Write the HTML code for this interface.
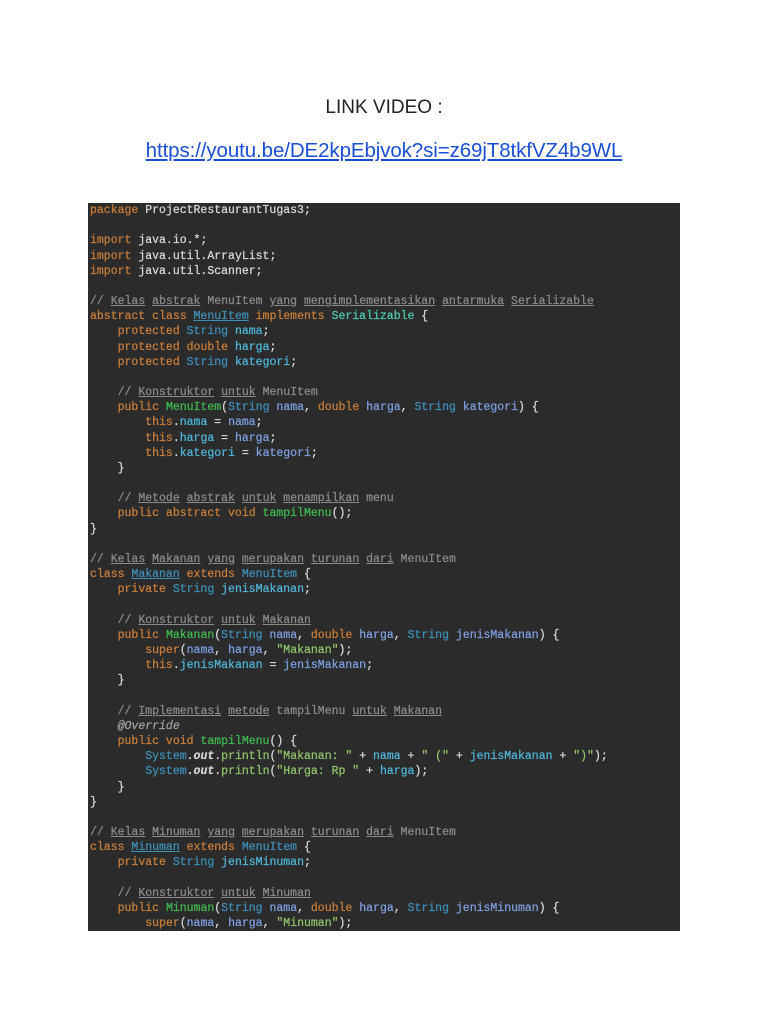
<!DOCTYPE html>
<html><head><meta charset="utf-8"><style>
body{margin:0;width:768px;height:1024px;background:#fff;position:relative;overflow:hidden}
.t1{position:absolute;top:97px;left:0;width:768px;text-align:center;font:19px "Liberation Sans",sans-serif;color:#222}
.t2{position:absolute;top:139px;left:0;width:768px;text-align:center;font:20.5px "Liberation Sans",sans-serif;color:#1a4fd6;text-decoration:underline;letter-spacing:-0.1px}
pre{position:absolute;left:88px;top:203px;width:592px;height:728px;margin:0;background:#2b2b2b;box-sizing:border-box;padding:0 0 0 2px;font:11.5px/15.17px "Liberation Mono",monospace;color:#d8d8d8;overflow:hidden;-webkit-text-stroke:0.25px}
.k{color:#c87d3a}.t{color:#3d8fb8}.f{color:#4fb4d8}.p{color:#7d9ee0}.m{color:#3fb950}.s{color:#8fc36a}.c{color:#8a8a8a}.u{text-decoration:underline}.a{color:#4ec9b0}.i{font-style:italic;color:#d2d2d2;font-weight:bold}.n{color:#a0a0a0;font-style:italic}
</style></head><body>
<div class="t1">LINK VIDEO :</div>
<div class="t2">https://youtu.be/DE2kpEbjvok?si=z69jT8tkfVZ4b9WL</div>
<pre><span class="k">package</span> ProjectRestaurantTugas3;

<span class="k">import</span> java.io.*;
<span class="k">import</span> java.util.ArrayList;
<span class="k">import</span> java.util.Scanner;

<span class="c">// <span class="u">Kelas</span> <span class="u">abstrak</span> MenuItem <span class="u">yang</span> <span class="u">mengimplementasikan</span> <span class="u">antarmuka</span> <span class="u">Serializable</span></span>
<span class="k">abstract class</span> <span class="t u">MenuItem</span> <span class="k">implements</span> <span class="a">Serializable</span> {
    <span class="k">protected</span> <span class="t">String</span> <span class="f">nama</span>;
    <span class="k">protected</span> <span class="k">double</span> <span class="f">harga</span>;
    <span class="k">protected</span> <span class="t">String</span> <span class="f">kategori</span>;

    <span class="c">// <span class="u">Konstruktor</span> <span class="u">untuk</span> MenuItem</span>
    <span class="k">public</span> <span class="m">MenuItem</span>(<span class="t">String</span> <span class="p">nama</span>, <span class="k">double</span> <span class="p">harga</span>, <span class="t">String</span> <span class="p">kategori</span>) {
        <span class="k">this</span>.<span class="f">nama</span> = <span class="p">nama</span>;
        <span class="k">this</span>.<span class="f">harga</span> = <span class="p">harga</span>;
        <span class="k">this</span>.<span class="f">kategori</span> = <span class="p">kategori</span>;
    }

    <span class="c">// <span class="u">Metode</span> <span class="u">abstrak</span> <span class="u">untuk</span> <span class="u">menampilkan</span> menu</span>
    <span class="k">public abstract void</span> <span class="m">tampilMenu</span>();
}

<span class="c">// <span class="u">Kelas</span> <span class="u">Makanan</span> <span class="u">yang</span> <span class="u">merupakan</span> <span class="u">turunan</span> <span class="u">dari</span> MenuItem</span>
<span class="k">class</span> <span class="t u">Makanan</span> <span class="k">extends</span> <span class="t">MenuItem</span> {
    <span class="k">private</span> <span class="t">String</span> <span class="f">jenisMakanan</span>;

    <span class="c">// <span class="u">Konstruktor</span> <span class="u">untuk</span> <span class="u">Makanan</span></span>
    <span class="k">public</span> <span class="m">Makanan</span>(<span class="t">String</span> <span class="p">nama</span>, <span class="k">double</span> <span class="p">harga</span>, <span class="t">String</span> <span class="p">jenisMakanan</span>) {
        <span class="k">super</span>(<span class="p">nama</span>, <span class="p">harga</span>, <span class="s">"Makanan"</span>);
        <span class="k">this</span>.<span class="f">jenisMakanan</span> = <span class="p">jenisMakanan</span>;
    }

    <span class="c">// <span class="u">Implementasi</span> <span class="u">metode</span> tampilMenu <span class="u">untuk</span> <span class="u">Makanan</span></span>
    <span class="n">@Override</span>
    <span class="k">public void</span> <span class="m">tampilMenu</span>() {
        <span class="t">System</span>.<span class="i">out</span>.<span class="s">println</span>(<span class="s">"Makanan: "</span> + <span class="f">nama</span> + <span class="s">" ("</span> + <span class="f">jenisMakanan</span> + <span class="s">")"</span>);
        <span class="t">System</span>.<span class="i">out</span>.<span class="s">println</span>(<span class="s">"Harga: Rp "</span> + <span class="f">harga</span>);
    }
}

<span class="c">// <span class="u">Kelas</span> <span class="u">Minuman</span> <span class="u">yang</span> <span class="u">merupakan</span> <span class="u">turunan</span> <span class="u">dari</span> MenuItem</span>
<span class="k">class</span> <span class="t u">Minuman</span> <span class="k">extends</span> <span class="t">MenuItem</span> {
    <span class="k">private</span> <span class="t">String</span> <span class="f">jenisMinuman</span>;

    <span class="c">// <span class="u">Konstruktor</span> <span class="u">untuk</span> <span class="u">Minuman</span></span>
    <span class="k">public</span> <span class="m">Minuman</span>(<span class="t">String</span> <span class="p">nama</span>, <span class="k">double</span> <span class="p">harga</span>, <span class="t">String</span> <span class="p">jenisMinuman</span>) {
        <span class="k">super</span>(<span class="p">nama</span>, <span class="p">harga</span>, <span class="s">"Minuman"</span>);
</pre>
</body></html>
